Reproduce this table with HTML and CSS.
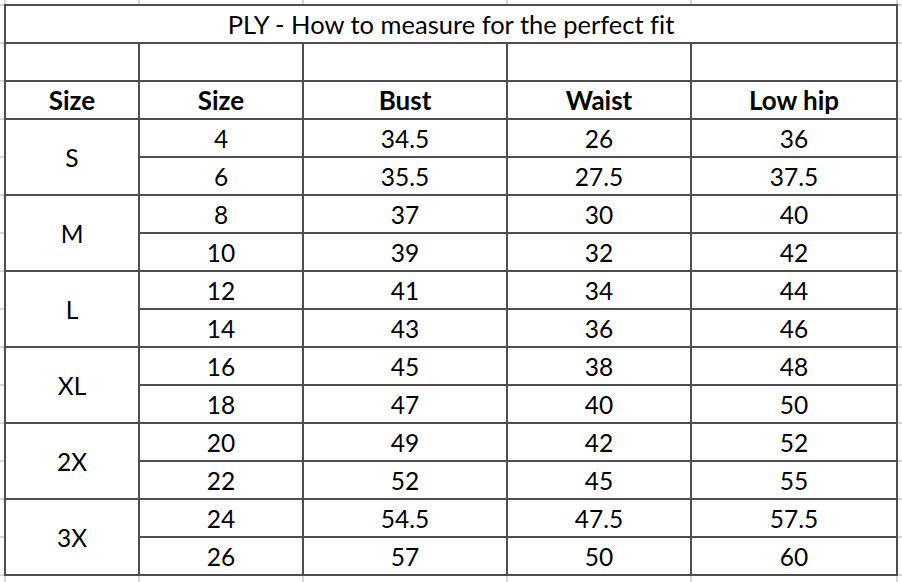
FILE: index.html
```html
<!DOCTYPE html>
<html lang="en">
<head>
<meta charset="utf-8">
<title>PLY - How to measure for the perfect fit</title>
<link rel="stylesheet" href="styles.css">
</head>
<body>
<div class="sheet">
  <div class="cell title">PLY - How to measure for the perfect fit</div>

  <div class="cell"></div><div class="cell"></div><div class="cell"></div><div class="cell"></div><div class="cell"></div>

  <div class="cell head">Size</div><div class="cell head">Size</div><div class="cell head">Bust</div><div class="cell head">Waist</div><div class="cell head">Low hip</div>

  <div class="cell group">S</div><div class="cell">4</div><div class="cell">34.5</div><div class="cell">26</div><div class="cell">36</div>
  <div class="cell">6</div><div class="cell">35.5</div><div class="cell">27.5</div><div class="cell">37.5</div>

  <div class="cell group">M</div><div class="cell">8</div><div class="cell">37</div><div class="cell">30</div><div class="cell">40</div>
  <div class="cell">10</div><div class="cell">39</div><div class="cell">32</div><div class="cell">42</div>

  <div class="cell group">L</div><div class="cell">12</div><div class="cell">41</div><div class="cell">34</div><div class="cell">44</div>
  <div class="cell">14</div><div class="cell">43</div><div class="cell">36</div><div class="cell">46</div>

  <div class="cell group">XL</div><div class="cell">16</div><div class="cell">45</div><div class="cell">38</div><div class="cell">48</div>
  <div class="cell">18</div><div class="cell">47</div><div class="cell">40</div><div class="cell">50</div>

  <div class="cell group">2X</div><div class="cell">20</div><div class="cell">49</div><div class="cell">42</div><div class="cell">52</div>
  <div class="cell">22</div><div class="cell">52</div><div class="cell">45</div><div class="cell">55</div>

  <div class="cell group">3X</div><div class="cell">24</div><div class="cell">54.5</div><div class="cell">47.5</div><div class="cell">57.5</div>
  <div class="cell">26</div><div class="cell">57</div><div class="cell">50</div><div class="cell">60</div>
</div>
</body>
</html>
```

FILE: styles.css
```css
html, body {
  margin: 0;
  padding: 0;
}

body {
  width: 902px;
  height: 582px;
  overflow: hidden;
  background-color: #ffffff;
  background-image:
    linear-gradient(to right, transparent 4px, #d6d6d6 4px, #d6d6d6 6px, transparent 6px),
    linear-gradient(to right, transparent 138px, #d6d6d6 138px, #d6d6d6 140px, transparent 140px),
    linear-gradient(to right, transparent 302px, #d6d6d6 302px, #d6d6d6 304px, transparent 304px),
    linear-gradient(to right, transparent 506px, #d6d6d6 506px, #d6d6d6 508px, transparent 508px),
    linear-gradient(to right, transparent 690px, #d6d6d6 690px, #d6d6d6 692px, transparent 692px),
    linear-gradient(to right, transparent 896px, #d6d6d6 896px, #d6d6d6 898px, transparent 898px),
    linear-gradient(to bottom, #d6d6d6 0, #d6d6d6 2px, transparent 2px);
  background-size: 100% 100%, 100% 100%, 100% 100%, 100% 100%, 100% 100%, 100% 100%, 100% 38px;
  background-position: 0 0, 0 0, 0 0, 0 0, 0 0, 0 0, 0 4px;
  background-repeat: no-repeat, no-repeat, no-repeat, no-repeat, no-repeat, no-repeat, repeat;
  font-family: Lato, "Open Sans", "Liberation Sans", sans-serif;
  font-variant-ligatures: none;
  color: #000000;
}

.sheet {
  margin: 4px 0 0 4px;
  width: 894px;
  box-sizing: border-box;
  display: grid;
  grid-template-columns: 132px 162px 202px 182px 204px;
  grid-auto-rows: 36px;
  gap: 2px;
  padding: 2px;
  background: #4e4e4e;
}

.cell {
  background: #ffffff;
  display: flex;
  align-items: flex-end;
  justify-content: center;
  font-size: 24.5px;
  line-height: 28px;
  padding-bottom: 3px;
  box-sizing: border-box;
  white-space: nowrap;
}

.title {
  grid-column: 1 / -1;
  font-size: 25.5px;
  line-height: 30px;
}

.head {
  font-weight: 700;
  font-size: 26px;
  line-height: 30px;
}

.group {
  grid-row: span 2;
  align-items: center;
  padding-bottom: 0;
  padding-top: 2px;
}
```
